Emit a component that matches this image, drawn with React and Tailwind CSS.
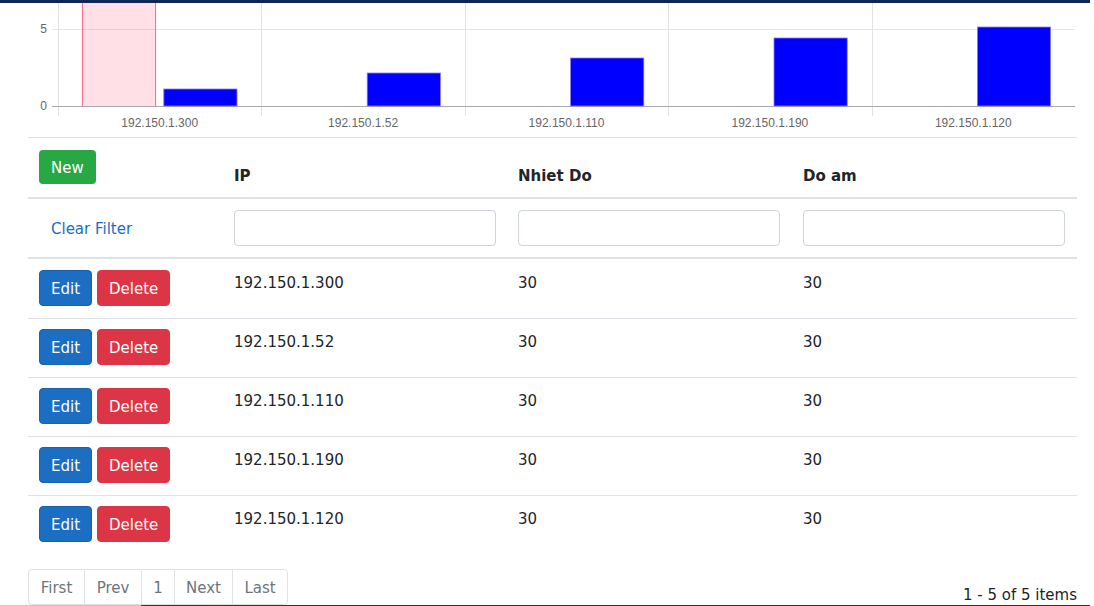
import React from "react";

const rows = [
  { ip: "192.150.1.300", temp: 30, hum: 30 },
  { ip: "192.150.1.52", temp: 30, hum: 30 },
  { ip: "192.150.1.110", temp: 30, hum: 30 },
  { ip: "192.150.1.190", temp: 30, hum: 30 },
  { ip: "192.150.1.120", temp: 30, hum: 30 },
];

// chart geometry in page pixels
const X0 = 58;
const CAT = 203.4;
const BAR = 73.2;
const ZERO = 106;
const blueTops = [89, 73, 58, 38, 27];

const Chart = () => (
  <svg width="1094" height="134" viewBox="0 3 1094 134" className="block shrink-0">
    {/* grid */}
    <line x1="52" y1="29.5" x2="1075" y2="29.5" stroke="#e6e6e6" />
    {[0, 1, 2, 3, 4].map((i) => (
      <line
        key={i}
        x1={Math.round(X0 + i * CAT) + 0.5}
        y1="3"
        x2={Math.round(X0 + i * CAT) + 0.5}
        y2="116"
        stroke="#e2e2e2"
      />
    ))}
    <line x1="52" y1="106.5" x2="1075" y2="106.5" stroke="#a8a8a8" />

    {/* pink dataset */}
    <rect x={X0 + 24.4} y="3" width={BAR} height={ZERO - 3} fill="rgba(255,99,132,0.2)" />
    <line x1={X0 + 24.4} y1="3" x2={X0 + 24.4} y2={ZERO} stroke="#ff6384" />
    <line x1={X0 + 24.4 + BAR} y1="3" x2={X0 + 24.4 + BAR} y2={ZERO} stroke="#ff6384" />

    {/* blue dataset */}
    {blueTops.map((t, i) => (
      <rect
        key={i}
        x={X0 + i * CAT + 105.8}
        y={t}
        width={BAR}
        height={ZERO - t}
        fill="#0000ff"
        stroke="#8c7cf0"
        strokeWidth="0.8"
      />
    ))}

    {/* labels */}
    <g fontFamily="'Liberation Sans', Arial, sans-serif" fontSize="12" fill="#666">
      <text x="47" y="33" textAnchor="end">5</text>
      <text x="47" y="110" textAnchor="end">0</text>
      {rows.map((r, i) => (
        <text key={r.ip} x={X0 + i * CAT + CAT / 2} y="127" textAnchor="middle">
          {r.ip}
        </text>
      ))}
    </g>
  </svg>
);

const cols = "grid grid-cols-[194px_284px_285px_286px]";

export default function App() {
  return (
    <div className="w-[1094px] h-[606px] overflow-hidden bg-white text-[15px] text-[#212529] font-['DejaVu_Sans',Verdana,sans-serif] flex flex-col">
      <div className="h-[3px] w-[1090px] bg-[#0f2657] shrink-0" />
      <Chart />

      <div className="mx-[28px] w-[1049px]">
        {/* header */}
        <div className={`${cols} h-[62px] border-t border-b-2 border-[#dee2e6]`}>
          <div className="pl-[11px] pt-3">
            <button className="h-[34px] px-3 pt-[2px] rounded bg-[#28a745] text-white leading-none">New</button>
          </div>
          <div className="px-3 pb-[10px] flex items-end font-bold leading-[22px]">IP</div>
          <div className="px-3 pb-[10px] flex items-end font-bold leading-[22px]">Nhiet Do</div>
          <div className="px-3 pb-[10px] flex items-end font-bold leading-[22px]">Do am</div>
        </div>

        {/* filter */}
        <div className={`${cols} h-[60px] border-b-2 border-[#dee2e6]`}>
          <div className="pl-[11px] pt-[11px]">
            <button className="h-[36px] px-3 pt-[3px] text-[#1b6ec2]">Clear Filter</button>
          </div>
          {[0, 1, 2].map((i) => (
            <div key={i} className="pl-3 pt-[11px]">
              <input className="w-[262px] h-[36px] border border-[#ced4da] rounded-[4px] bg-white" />
            </div>
          ))}
        </div>

        {/* data rows */}
        {rows.map((r, i) => (
          <div
            key={r.ip}
            className={`${cols} h-[59px] ${i === 0 ? "pt-[11px]" : "pt-[10px] border-t border-[#dee2e6]"}`}
          >
            <div className="pl-[11px] flex gap-[5px] items-start">
              <button className="h-[36px] px-[11px] pt-[3px] rounded bg-[#1b6ec2] border border-[#1861ac] text-white">Edit</button>
              <button className="h-[36px] px-[11px] pt-[3px] rounded bg-[#dc3545] border border-[#dc3545] text-white">Delete</button>
            </div>
            <div className="px-3 pt-[2px] leading-[22px]">{r.ip}</div>
            <div className="px-3 pt-[2px] leading-[22px]">{r.temp}</div>
            <div className="px-3 pt-[2px] leading-[22px]">{r.hum}</div>
          </div>
        ))}

        {/* pager */}
        <div className="mt-[15px] flex justify-between items-end">
          <div className="flex h-[36px] border border-[#dee2e6] rounded-[4px] text-[#6c757d]">
            <span className="w-[56px] pt-[2px] flex items-center justify-center border-r border-[#dee2e6]">First</span>
            <span className="w-[57px] pt-[2px] flex items-center justify-center border-r border-[#dee2e6]">Prev</span>
            <span className="w-[33px] pt-[2px] flex items-center justify-center border-r border-[#dee2e6]">1</span>
            <span className="w-[58px] pt-[2px] flex items-center justify-center border-r border-[#dee2e6]">Next</span>
            <span className="w-[54px] pt-[2px] flex items-center justify-center">Last</span>
          </div>
          <div className="leading-[20px] pt-[2px]">1 - 5 of 5 items</div>
        </div>
      </div>

      <div className="mt-auto flex h-[2px] w-[1090px] shrink-0">
        <div className="w-[141px] bg-[#c6c6c6]" />
        <div className="flex-1 bg-[#333]" />
      </div>
    </div>
  );
}
